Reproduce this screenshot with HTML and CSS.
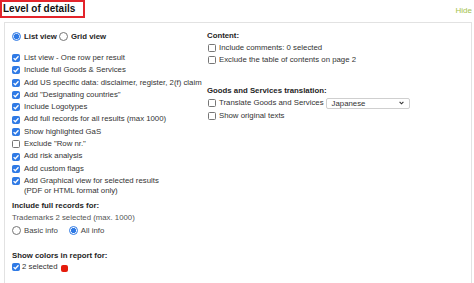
FILE: index.html
```html
<!DOCTYPE html>
<html>
<head>
<meta charset="utf-8">
<link rel="stylesheet" href="styles.css">
</head>
<body>
<div class="header">
  <div class="title">Level of details</div>
  <a class="hide">Hide</a>
</div>
<div class="panel">
  <div class="left">
    <div class="radios top">
      <span class="radio on"></span><span class="bold">List view</span>
      <span class="radio"></span><span class="bold">Grid view</span>
    </div>
    <div class="checks">
      <div class="row"><span class="cb on"></span><span>List view - One row per result</span></div>
      <div class="row"><span class="cb on"></span><span>Include full Goods &amp; Services</span></div>
      <div class="row"><span class="cb on"></span><span>Add US specific data: disclaimer, register, 2(f) claim</span></div>
      <div class="row"><span class="cb on"></span><span>Add "Designating countries"</span></div>
      <div class="row"><span class="cb on"></span><span>Include Logotypes</span></div>
      <div class="row"><span class="cb on"></span><span>Add full records for all results (max 1000)</span></div>
      <div class="row"><span class="cb on"></span><span>Show highlighted GaS</span></div>
      <div class="row"><span class="cb"></span><span>Exclude "Row nr."</span></div>
      <div class="row"><span class="cb on"></span><span>Add risk analysis</span></div>
      <div class="row"><span class="cb on"></span><span>Add custom flags</span></div>
      <div class="row wrap"><span class="cb on"></span><span>Add Graphical view for selected results<br>(PDF or HTML format only)</span></div>
    </div>
    <div class="heading records">Include full records for:</div>
    <div class="note">Trademarks 2 selected (max. 1000)</div>
    <div class="radios info">
      <span class="radio"></span><span class="lbl">Basic info</span>
      <span class="radio on gapl"></span><span class="lbl">All info</span>
    </div>
    <div class="heading colors">Show colors in report for:</div>
    <div class="row sel"><span class="cb on"></span><span class="tight">2 selected</span><span class="swatch"></span></div>
  </div>
  <div class="right">
    <div class="heading rhead">Content:</div>
    <div class="row"><span class="cb"></span><span>Include comments: 0 selected</span></div>
    <div class="row"><span class="cb"></span><span>Exclude the table of contents on page 2</span></div>
    <div class="heading goods">Goods and Services translation:</div>
    <div class="row tall"><span class="cb"></span><span>Translate Goods and Services</span>
      <div class="select"><span>Japanese</span>
        <svg class="chev" width="5" height="4" viewBox="0 0 5 4"><path d="M0.6 0.8 L2.5 2.8 L4.4 0.8" fill="none" stroke="#333" stroke-width="1.1"/></svg>
      </div>
    </div>
    <div class="row"><span class="cb"></span><span>Show original texts</span></div>
  </div>
</div>
</body>
</html>
```
FILE: styles.css
```css
html, body {
  margin: 0;
  padding: 0;
  background: #fff;
}
body {
  font-family: "Liberation Sans", Arial, sans-serif;
  font-size: 7.8px;
  color: #333;
  width: 474px;
  height: 283px;
  overflow: hidden;
}
.header {
  display: flex;
  justify-content: space-between;
  align-items: center;
  height: 18px;
}
.title {
  box-sizing: border-box;
  height: 18px;
  border: 2px solid #e3242b;
  padding: 1px 8px 1px 1px;
  font-size: 10px;
  line-height: 12px;
  font-weight: bold;
  color: #111;
}
.hide {
  color: #a3c24a;
  font-size: 8px;
  margin-right: 2px;
  margin-top: 2px;
}
.panel {
  box-sizing: border-box;
  margin: 4px 0 0 4px;
  width: 468px;
  height: 261px;
  border: 1px solid #e2e2e2;
  border-bottom: none;
  padding: 7px 0 0 7px;
  display: grid;
  grid-template-columns: 195px 1fr;
}
.left, .right {
  display: flex;
  flex-direction: column;
}
.bold, .heading {
  font-weight: bold;
  color: #1e1e1e;
}
.radios {
  display: flex;
  align-items: center;
  height: 12px;
}
.radio {
  box-sizing: border-box;
  width: 9px;
  height: 9px;
  border-radius: 50%;
  border: 1px solid #767676;
  background: #fff;
  margin-right: 3px;
  flex: none;
}
.radio.on {
  border-color: #2f7ae5;
  background: radial-gradient(circle, #2f7ae5 0 2.4px, #fff 2.9px);
}
.radios.top .radio.on {
  background: radial-gradient(circle, #2f7ae5 0 2.4px, #cfe0fa 2.9px);
}
.radios.top .bold {
  margin-right: 2px;
}
.checks {
  margin-top: 10px;
  display: flex;
  flex-direction: column;
}
.row {
  display: flex;
  align-items: center;
  height: 12.3px;
  line-height: 12.3px;
  white-space: nowrap;
}
.row.wrap {
  align-items: flex-start;
  height: auto;
  line-height: 10.5px;
  margin-top: 0.9px;
}
.row.wrap .cb {
  margin-top: 1.5px;
}
.cb {
  box-sizing: border-box;
  width: 8px;
  height: 8px;
  border: 1px solid #767676;
  border-radius: 1.5px;
  background: #fff;
  margin-right: 4px;
  flex: none;
}
.cb.on {
  border-color: #2f7ae5;
  background-color: #2f7ae5;
  background-image: url("data:image/svg+xml,%3Csvg xmlns='http://www.w3.org/2000/svg' viewBox='0 0 8 8'%3E%3Cpath d='M1.6 4.1 L3.3 5.7 L6.5 2.2' fill='none' stroke='white' stroke-width='1.3'/%3E%3C/svg%3E");
  background-size: 8px 8px;
  background-position: -1px -1px;
}
.heading {
  height: 12px;
  line-height: 12px;
}
.records {
  margin-top: 3px;
}
.note {
  height: 12px;
  line-height: 12px;
  color: #555;
}
.radios.info {
  margin-top: 1px;
}
.lbl {
  color: #444;
}
.gapl {
  margin-left: 11px;
}
.colors {
  margin-top: 13px;
}
.row.sel {
  height: 11px;
}
.row.sel .cb {
  margin-right: 2px;
}
.swatch {
  width: 7px;
  height: 7px;
  border-radius: 2px;
  background: #e51c0c;
  margin-left: 3px;
  margin-top: 3px;
}
.right .row .cb {
  margin-left: 1px;
  margin-right: 3px;
}
.goods {
  margin-top: 18px;
}
.row.tall {
  height: 13px;
}
.select {
  box-sizing: border-box;
  margin-left: 2px;
  width: 84px;
  height: 11px;
  border: 1px solid #cfcfcf;
  border-radius: 2px;
  display: flex;
  align-items: center;
  justify-content: space-between;
  padding: 0 5px 0 5px;
  line-height: 9px;
  color: #333;
}
.chev {
  display: block;
}
```
